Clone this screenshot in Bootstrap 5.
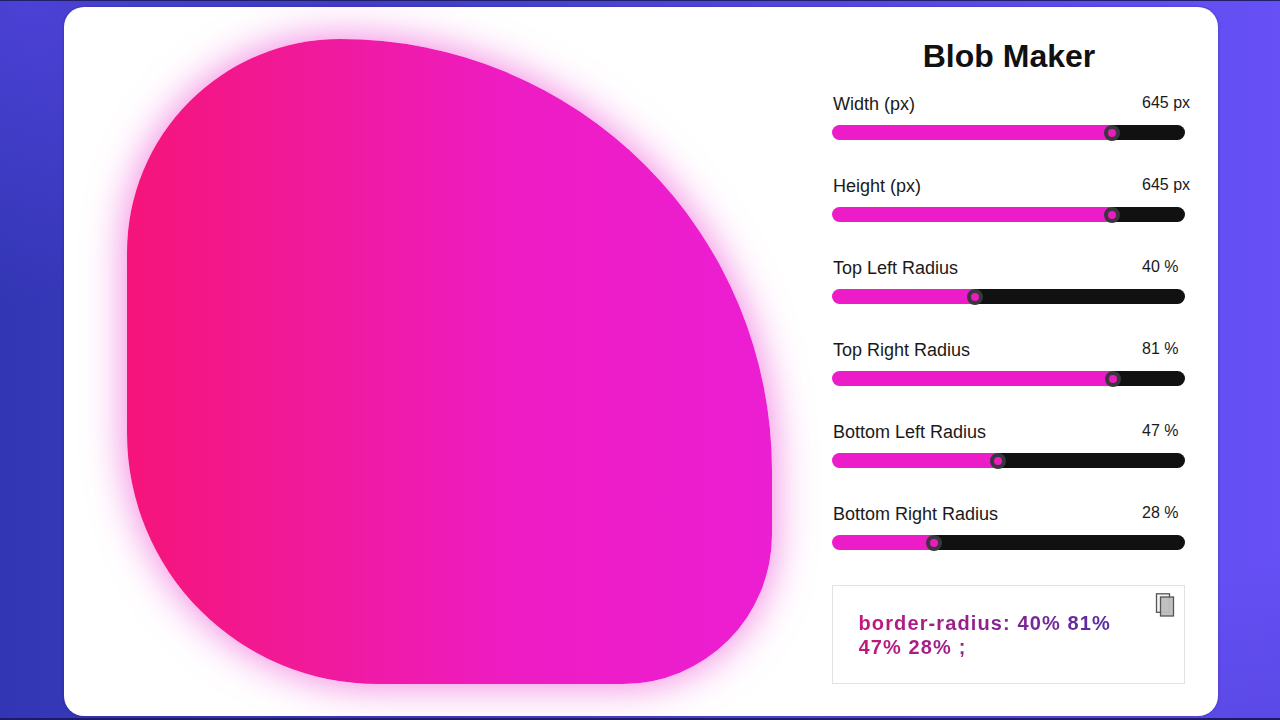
<!DOCTYPE html>
<html lang="en">
<head>
<meta charset="utf-8">
<title>Blob Maker</title>
<link rel="stylesheet" href="https://cdn.jsdelivr.net/npm/bootstrap@5.3.0/dist/css/bootstrap.min.css">
<style>
html,body{height:720px;overflow:hidden}
body{font-family:"Liberation Sans",Arial,sans-serif;color:#111;background:radial-gradient(ellipse 340px 300px at 30px 0,rgba(82,68,222,.8),rgba(82,68,222,0)),linear-gradient(to top left,rgba(70,60,200,.35),rgba(70,60,200,0) 12%),linear-gradient(to right,#3236b4,#6650f6);border-top:1px solid #20206a;border-bottom:2px solid #1c1c66}
.maker-card{width:1154px;height:709px;margin:6px 0 0 64px;border-radius:20px;background:#fff;box-shadow:0 0 3px rgba(10,10,60,.3)}
.blob-side{padding:32px 0 0 63px;width:768px;flex:none}
.blob-shape{width:645px;height:645px;border-radius:40% 81% 28% 47%;background:linear-gradient(to right,#f5147a,#f01a9c 30%,#ee1cc4 60%,#ec1ed2);box-shadow:0 0 42px rgba(232,30,200,.6)}
.panel-side{width:353px;flex:none}
.maker-title{font-size:32px;font-weight:700;line-height:37px;margin:31px 0 0 1px;text-align:center;color:#111}
.ctl-row{height:82px}
.ctl-head{height:22px}
.ctl-label{font-size:18px;line-height:22px;margin:0;padding-left:1px;color:#1a1a1a}
.ctl-value{font-size:16px;line-height:20px;width:49px;margin-right:-6px;flex:none;color:#1a1a1a;white-space:nowrap;position:relative;top:-1px}
.ctl-list{margin-top:18px}
.blob-range{-webkit-appearance:none;appearance:none;display:block;width:353px;height:15px;margin:10px 0 0;border-radius:8px;outline:0}
.blob-range::-webkit-slider-thumb{-webkit-appearance:none;appearance:none;width:16px;height:16px;border-radius:50%;background:#ea1cbc;border:4px solid #3a363e}
.code-box{height:99px;margin-top:0;border:1px solid #e2e2e2;padding:25px 60px 0 25.5px}
.code-text{font-size:20px;font-weight:700;line-height:24px;letter-spacing:1.12px;margin:0;background:linear-gradient(to right,#c4177c,#4f2fa6);-webkit-background-clip:text;background-clip:text;color:transparent}
.copy-icon{position:absolute;top:6.5px;right:9px;width:20px;height:24px}
</style>
</head>
<body>
<main class="maker-card d-flex">
  <div class="blob-side"><div class="blob-shape"></div></div>
  <section class="panel-side">
    <h1 class="maker-title">Blob Maker</h1>
    <div class="ctl-list">
      <div class="ctl-row"><div class="ctl-head d-flex justify-content-between align-items-center"><label class="ctl-label">Width (px)</label><span class="ctl-value">645 px</span></div><input class="blob-range" type="range" min="0" max="800" value="645" style="background:linear-gradient(to right,#ec1dc8 280px,#111 280px)"></div>
      <div class="ctl-row"><div class="ctl-head d-flex justify-content-between align-items-center"><label class="ctl-label">Height (px)</label><span class="ctl-value">645 px</span></div><input class="blob-range" type="range" min="0" max="800" value="645" style="background:linear-gradient(to right,#ec1dc8 280px,#111 280px)"></div>
      <div class="ctl-row"><div class="ctl-head d-flex justify-content-between align-items-center"><label class="ctl-label">Top Left Radius</label><span class="ctl-value">40 %</span></div><input class="blob-range" type="range" min="0" max="100" value="40" style="background:linear-gradient(to right,#ec1dc8 143px,#111 143px)"></div>
      <div class="ctl-row"><div class="ctl-head d-flex justify-content-between align-items-center"><label class="ctl-label">Top Right Radius</label><span class="ctl-value">81 %</span></div><input class="blob-range" type="range" min="0" max="100" value="81" style="background:linear-gradient(to right,#ec1dc8 281px,#111 281px)"></div>
      <div class="ctl-row"><div class="ctl-head d-flex justify-content-between align-items-center"><label class="ctl-label">Bottom Left Radius</label><span class="ctl-value">47 %</span></div><input class="blob-range" type="range" min="0" max="100" value="47" style="background:linear-gradient(to right,#ec1dc8 166px,#111 166px)"></div>
      <div class="ctl-row"><div class="ctl-head d-flex justify-content-between align-items-center"><label class="ctl-label">Bottom Right Radius</label><span class="ctl-value">28 %</span></div><input class="blob-range" type="range" min="0" max="100" value="28" style="background:linear-gradient(to right,#ec1dc8 102px,#111 102px)"></div>
    </div>
    <div class="code-box position-relative">
      <p class="code-text">border-radius: 40% 81% 47% 28% ;</p>
      <svg class="copy-icon" viewBox="0 0 20 24" aria-hidden="true"><rect x="1.5" y="0.8" width="13" height="18.5" fill="#f4f4f4" stroke="#555" stroke-width="1.3"/><rect x="5.5" y="4" width="13" height="19" fill="#bdbdbd" fill-opacity=".95" stroke="#555" stroke-width="1.3"/></svg>
    </div>
  </section>
</main>
</body>
</html>
